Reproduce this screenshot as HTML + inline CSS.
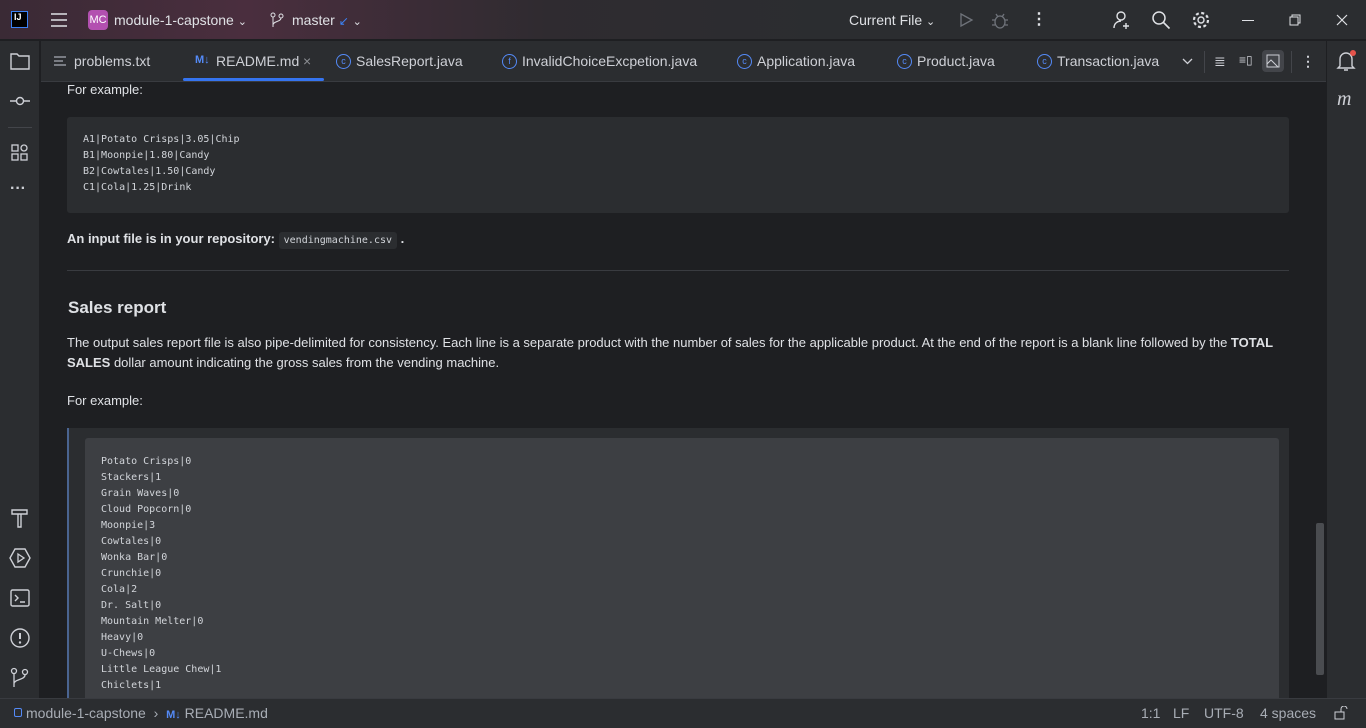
<!DOCTYPE html>
<html><head><meta charset="utf-8"><style>
*{margin:0;padding:0;box-sizing:border-box}
body{width:1366px;height:728px;overflow:hidden;background:#1e1f22;font-family:"Liberation Sans",sans-serif;color:#dfe1e5;position:relative}
.abs{position:absolute}
.title{left:0;top:0;width:1366px;height:40px;background:linear-gradient(90deg,#3a2a35 0%,#4a2e3e 18%,#2f2b30 40%,#2b2d30 60%);border-bottom:1px solid #1e1f22}
.tb{font-size:14px;color:#dfe1e5}
.left{left:0;top:41px;width:40px;height:657px;background:#2b2d30;border-right:1px solid #1e1f22}
.right{left:1326px;top:41px;width:40px;height:657px;background:#2b2d30;border-left:1px solid #1e1f22}
.tabs{left:41px;top:41px;width:1285px;height:41px;background:#2b2d30;border-bottom:1px solid #393b40}
.tab{position:absolute;top:12px;font-size:14px;color:#ced0d6;white-space:nowrap}
.ci{position:absolute;top:13px;width:15px;height:15px;border:1.5px solid #548af7;border-radius:50%;color:#548af7;font-size:9px;line-height:12px;text-align:center}
.status{left:0;top:698px;width:1366px;height:30px;background:#2b2d30;border-top:1px solid #393b40;font-size:14px;color:#a8adb5}
.mono{font-family:"DejaVu Sans Mono","Liberation Mono",monospace;font-size:10px;color:#d2d5da;line-height:16px}
p{font-size:13px;line-height:20px;color:#dfe1e5}
svg{position:absolute}
</style></head><body>
<div class="abs title"></div>
<div class="abs" style="left:11px;top:11px;width:17px;height:17px;background:#000;border:1px solid #3b82f6;color:#fff;font-size:9px;font-weight:bold;padding:1px 2px;line-height:9px">IJ</div>
<svg style="left:50px;top:12px" width="18" height="16"><path d="M1 2h16M1 8h16M1 14h16" stroke="#dfe1e5" stroke-width="1.6"/></svg>
<div class="abs" style="left:88px;top:10px;width:20px;height:20px;border-radius:4px;background:#b350b0;color:#fff;font-size:11px;line-height:20px;text-align:center">MC</div>
<div class="abs tb" style="left:114px;top:12px">module-1-capstone <span style="font-size:11px">⌄</span></div>
<svg style="left:270px;top:12px" width="14" height="16"><circle cx="3" cy="3" r="2" fill="none" stroke="#dfe1e5"/><circle cx="11" cy="4" r="2" fill="none" stroke="#dfe1e5"/><path d="M3 5v10M11 6c0 4-8 3-8 7" fill="none" stroke="#dfe1e5"/></svg>
<div class="abs tb" style="left:292px;top:12px">master <span style="color:#3b82f6;font-size:12px">↙</span> <span style="font-size:11px">⌄</span></div>
<div class="abs tb" style="left:849px;top:12px">Current File <span style="font-size:11px">⌄</span></div>
<svg style="left:958px;top:12px" width="16" height="16"><path d="M3 2l11 6-11 6z" fill="none" stroke="#6f737a" stroke-width="1.3"/></svg>
<svg style="left:991px;top:11px" width="18" height="18"><ellipse cx="9" cy="11" rx="5" ry="6" fill="none" stroke="#6f737a" stroke-width="1.3"/><path d="M1 9h3M14 9h3M1 14h3M14 14h3M5 3l2 3M13 3l-2 3" stroke="#6f737a" stroke-width="1.3"/></svg>
<div class="abs tb" style="left:1031px;top:9px;font-weight:bold;font-size:16px">⋮</div>
<svg style="left:1112px;top:10px" width="20" height="20"><circle cx="9" cy="6" r="4" fill="none" stroke="#dfe1e5" stroke-width="1.4"/><path d="M2 18c0-5 4-7 7-7M14 13v6M11 16h6" fill="none" stroke="#dfe1e5" stroke-width="1.4"/></svg>
<svg style="left:1151px;top:10px" width="20" height="20"><circle cx="8" cy="8" r="6" fill="none" stroke="#dfe1e5" stroke-width="1.5"/><path d="M12.5 12.5l6 6" stroke="#dfe1e5" stroke-width="1.6"/></svg>
<svg style="left:1191px;top:10px" width="20" height="20"><circle cx="10" cy="10" r="3" fill="none" stroke="#dfe1e5" stroke-width="1.4"/><circle cx="10" cy="10" r="7" fill="none" stroke="#dfe1e5" stroke-width="2.2" stroke-dasharray="3 2.5"/></svg>
<div class="abs" style="left:1242px;top:20px;width:12px;height:1px;background:#dfe1e5"></div>
<svg style="left:1289px;top:14px" width="12" height="12"><rect x="1" y="3" width="8" height="8" fill="none" stroke="#dfe1e5"/><path d="M3 3V1h8v8H9" fill="none" stroke="#dfe1e5"/></svg>
<svg style="left:1336px;top:14px" width="12" height="12"><path d="M1 1l10 10M11 1L1 11" stroke="#dfe1e5" stroke-width="1.2"/></svg>

<div class="abs left"></div>
<svg style="left:10px;top:52px" width="20" height="18"><path d="M1 2h6l2 2h10v13H1z" fill="none" stroke="#ced0d6" stroke-width="1.4"/></svg>
<svg style="left:9px;top:92px" width="22" height="18"><circle cx="11" cy="9" r="3.5" fill="none" stroke="#ced0d6" stroke-width="1.4"/><path d="M1 9h6M15 9h6" stroke="#ced0d6" stroke-width="1.4"/></svg>
<div class="abs" style="left:8px;top:127px;width:24px;height:1px;background:#43454a"></div>
<svg style="left:10px;top:143px" width="20" height="20"><rect x="2" y="2" width="6" height="6" fill="none" stroke="#ced0d6" stroke-width="1.3"/><rect x="2" y="11" width="6" height="6" fill="none" stroke="#ced0d6" stroke-width="1.3"/><rect x="11" y="11" width="6" height="6" fill="none" stroke="#ced0d6" stroke-width="1.3"/><circle cx="14" cy="5" r="3" fill="none" stroke="#ced0d6" stroke-width="1.3"/></svg>
<div class="abs" style="left:10px;top:180px;color:#ced0d6;font-size:16px;font-weight:bold">···</div>
<svg style="left:10px;top:508px" width="20" height="20"><path d="M2 2h15v4H2zM8 6v13h3V6" fill="none" stroke="#ced0d6" stroke-width="1.4"/></svg>
<svg style="left:9px;top:547px" width="22" height="22"><path d="M6 2h10l5 9-5 9H6l-5-9z" fill="none" stroke="#ced0d6" stroke-width="1.4"/><path d="M9 7l6 4-6 4z" fill="none" stroke="#ced0d6" stroke-width="1.3"/></svg>
<svg style="left:10px;top:588px" width="20" height="20"><rect x="1" y="2" width="18" height="16" rx="1.5" fill="none" stroke="#ced0d6" stroke-width="1.4"/><path d="M5 7l3 3-3 3M10 14h5" fill="none" stroke="#ced0d6" stroke-width="1.4"/></svg>
<svg style="left:9px;top:627px" width="22" height="22"><circle cx="11" cy="11" r="9" fill="none" stroke="#ced0d6" stroke-width="1.4"/><path d="M11 6v6" stroke="#ced0d6" stroke-width="2"/><circle cx="11" cy="15.5" r="1.2" fill="#ced0d6"/></svg>
<svg style="left:10px;top:667px" width="20" height="22"><circle cx="4" cy="4" r="2.5" fill="none" stroke="#ced0d6" stroke-width="1.3"/><circle cx="15" cy="5" r="2.5" fill="none" stroke="#ced0d6" stroke-width="1.3"/><path d="M4 7v13M15 8c0 5-11 4-11 9" fill="none" stroke="#ced0d6" stroke-width="1.3"/></svg>

<div class="abs right"></div>
<svg style="left:1336px;top:49px" width="22" height="24"><path d="M4 17V10a6 6 0 0 1 12 0v7l2 2H2z M8 21h4" fill="none" stroke="#ced0d6" stroke-width="1.4"/><circle cx="17" cy="4" r="3" fill="#e5534b"/></svg>
<div class="abs" style="left:1337px;top:88px;color:#ced0d6;font-size:20px;font-style:italic;font-family:'Liberation Serif',serif">m</div>

<div class="abs tabs">
 <svg style="left:13px;top:15px" width="12" height="11"><path d="M0 1h12M0 5h9M0 9h12" stroke="#a8adb5" stroke-width="1.2"/></svg>
 <div class="tab" style="left:33px">problems.txt</div>
 <div class="tab" style="left:154px;top:13px;color:#548af7;font-size:11px;font-weight:bold">M↓</div>
 <div class="tab" style="left:175px">README.md</div>
 <div class="tab" style="left:262px;color:#8c8f94">×</div>
 <div class="abs" style="left:142px;top:37px;width:141px;height:3px;background:#3574f0;border-radius:2px"></div>
 <div class="ci" style="left:295px">c</div><div class="tab" style="left:315px">SalesReport.java</div>
 <div class="ci" style="left:461px">f</div><div class="tab" style="left:481px">InvalidChoiceExcpetion.java</div>
 <div class="ci" style="left:696px">c</div><div class="tab" style="left:716px">Application.java</div>
 <div class="ci" style="left:856px">c</div><div class="tab" style="left:876px">Product.java</div>
 <div class="ci" style="left:996px">c</div><div class="tab" style="left:1016px">Transaction.java</div>
 <svg style="left:1141px;top:17px" width="11" height="7"><path d="M1 1l4.5 4.5L10 1" fill="none" stroke="#ced0d6" stroke-width="1.3"/></svg>
 <div class="abs" style="left:1163px;top:10px;width:1px;height:22px;background:#43454a"></div>
 <div class="tab" style="left:1173px">≣</div>
 <div class="tab" style="left:1198px;font-size:12px">≡▯</div>
 <div class="abs" style="left:1221px;top:9px;width:22px;height:22px;background:#43454a;border-radius:4px"></div>
 <svg style="left:1225px;top:13px" width="14" height="14"><rect x="1" y="1" width="12" height="12" fill="none" stroke="#ced0d6"/><path d="M1 10l4-4 7 7" fill="none" stroke="#ced0d6"/></svg>
 <div class="abs" style="left:1250px;top:10px;width:1px;height:22px;background:#43454a"></div>
 <div class="tab" style="left:1260px;font-weight:bold">⋮</div>
</div>

<p class="abs" style="left:67px;top:80px">For example:</p>
<div class="abs" style="left:67px;top:117px;width:1222px;height:96px;background:#2b2d30;border-radius:3px"></div>
<div class="abs mono" style="left:83px;top:132px">A1|Potato Crisps|3.05|Chip<br>B1|Moonpie|1.80|Candy<br>B2|Cowtales|1.50|Candy<br>C1|Cola|1.25|Drink</div>
<p class="abs" style="left:67px;top:229px"><b>An input file is in your repository:</b> <span class="mono" style="background:#2b2d30;padding:3px 5px;border-radius:3px;font-size:10px">vendingmachine.csv</span> <b>.</b></p>
<div class="abs" style="left:67px;top:270px;width:1222px;height:1px;background:#393b40"></div>
<div class="abs" style="left:68px;top:298px;font-size:17px;font-weight:bold;color:#dfe1e5">Sales report</div>
<p class="abs" style="left:67px;top:333px;width:1222px">The output sales report file is also pipe-delimited for consistency. Each line is a separate product with the number of sales for the applicable product. At the end of the report is a blank line followed by the <b>TOTAL SALES</b> dollar amount indicating the gross sales from the vending machine.</p>
<p class="abs" style="left:67px;top:391px">For example:</p>
<div class="abs" style="left:67px;top:428px;width:1222px;height:270px;background:#2b2d30;border-left:2px solid #4a6491"></div>
<div class="abs" style="left:85px;top:438px;width:1194px;height:260px;background:#3d3f43;border-radius:3px 3px 0 0"></div>
<div class="abs mono" style="left:101px;top:454px">Potato Crisps|0<br>Stackers|1<br>Grain Waves|0<br>Cloud Popcorn|0<br>Moonpie|3<br>Cowtales|0<br>Wonka Bar|0<br>Crunchie|0<br>Cola|2<br>Dr. Salt|0<br>Mountain Melter|0<br>Heavy|0<br>U-Chews|0<br>Little League Chew|1<br>Chiclets|1</div>
<div class="abs" style="left:1305px;top:82px;width:21px;height:616px;background:#1e1f22"></div>
<div class="abs" style="left:1316px;top:523px;width:8px;height:152px;background:#4a4c50;border-radius:2px"></div>

<div class="abs status">
 <div class="abs" style="left:14px;top:9px;width:8px;height:9px;border:1.5px solid #548af7;border-radius:2px"></div>
 <div class="abs" style="left:26px;top:6px">module-1-capstone &nbsp;›&nbsp; <span style="color:#548af7;font-size:11px;font-weight:bold">M↓</span> README.md</div>
 <div class="abs" style="left:1141px;top:6px">1:1</div>
 <div class="abs" style="left:1173px;top:6px">LF</div>
 <div class="abs" style="left:1204px;top:6px">UTF-8</div>
 <div class="abs" style="left:1260px;top:6px">4 spaces</div>
 <svg style="left:1334px;top:7px" width="14" height="14"><rect x="1" y="6" width="9" height="7" fill="none" stroke="#ced0d6"/><path d="M7 6V3a3 3 0 0 1 6 0" fill="none" stroke="#ced0d6"/></svg>
</div>
</body></html>
